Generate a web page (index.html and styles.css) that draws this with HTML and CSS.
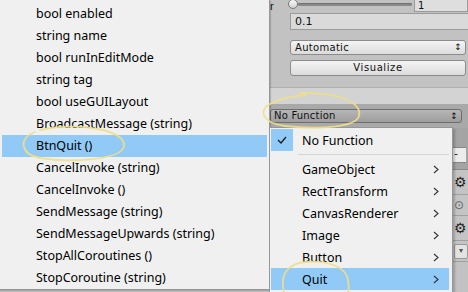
FILE: index.html
```html
<!DOCTYPE html>
<html>
<head>
<meta charset="utf-8">
<link rel="stylesheet" href="styles.css">
</head>
<body>
<div class="inspector">
  <div class="row-slider">
    <span class="lbl">r</span>
    <div class="slider"><span class="thumb"></span><span class="track"></span></div>
    <div class="numfield">1</div>
  </div>
  <div class="field">0.1</div>
  <div class="popup">Automatic<span class="updown">&#x2195;</span></div>
  <div class="button">Visualize</div>
  <div class="section">
    <div class="section-top"></div>
    <div class="event-row">
      <div class="fn-popup">No Function<span class="updown">&#x2195;</span></div>
    </div>
    <div class="event-body">
      <div class="minus-field">-</div>
    </div>
    <div class="comp-row"><span class="gear">&#x2699;</span></div>
    <div class="comp-row small"><span class="target">&#x2299;</span></div>
    <div class="comp-row"><span class="gear">&#x2699;</span></div>
    <div class="comp-row small"><span class="mini-drop">&#x25BE;</span></div>
  </div>
</div>

<div class="menu menu-left">
  <div class="item">bool enabled</div>
  <div class="item">string name</div>
  <div class="item">bool runInEditMode</div>
  <div class="item">string tag</div>
  <div class="item">bool useGUILayout</div>
  <div class="item">BroadcastMessage (string)</div>
  <div class="item hl">BtnQuit ()</div>
  <div class="item">CancelInvoke (string)</div>
  <div class="item">CancelInvoke ()</div>
  <div class="item">SendMessage (string)</div>
  <div class="item">SendMessageUpwards (string)</div>
  <div class="item">StopAllCoroutines ()</div>
  <div class="item">StopCoroutine (string)</div>
</div>

<div class="menu menu-right">
  <div class="item2 checked"><span class="check"><svg width="22" height="22" viewBox="0 0 22 22"><polyline points="7,11 10,14 15,8" fill="none" stroke="#1b1b1b" stroke-width="1.3"/></svg></span><span class="t">No Function</span></div>
  <div class="sep"></div>
  <div class="item2"><span class="check"></span><span class="t">GameObject</span><svg class="chev" width="6" height="9" viewBox="0 0 6 9"><polyline points="1,1 5,4.5 1,8" fill="none" stroke="#333" stroke-width="1.1"/></svg></div>
  <div class="item2"><span class="check"></span><span class="t">RectTransform</span><svg class="chev" width="6" height="9" viewBox="0 0 6 9"><polyline points="1,1 5,4.5 1,8" fill="none" stroke="#333" stroke-width="1.1"/></svg></div>
  <div class="item2"><span class="check"></span><span class="t">CanvasRenderer</span><svg class="chev" width="6" height="9" viewBox="0 0 6 9"><polyline points="1,1 5,4.5 1,8" fill="none" stroke="#333" stroke-width="1.1"/></svg></div>
  <div class="item2"><span class="check"></span><span class="t">Image</span><svg class="chev" width="6" height="9" viewBox="0 0 6 9"><polyline points="1,1 5,4.5 1,8" fill="none" stroke="#333" stroke-width="1.1"/></svg></div>
  <div class="item2"><span class="check"></span><span class="t">Button</span><svg class="chev" width="6" height="9" viewBox="0 0 6 9"><polyline points="1,1 5,4.5 1,8" fill="none" stroke="#333" stroke-width="1.1"/></svg></div>
  <div class="item2 hl"><span class="check"></span><span class="t">Quit</span><svg class="chev" width="6" height="9" viewBox="0 0 6 9"><polyline points="1,1 5,4.5 1,8" fill="none" stroke="#333" stroke-width="1.1"/></svg></div>
</div>

<svg class="marks" width="468" height="292" viewBox="0 0 468 292">
  <g fill="none" stroke="#efe08a" stroke-width="1.8" stroke-linecap="round" opacity="0.9">
    <path d="M40,130 C80,122 126,130 124,146 C122,160 70,163 40,158 C20,154 18,138 35,132"/>
    <path d="M300,93 C340,92 362,103 359,116 C356,127 320,130 285,126 C262,123 258,110 270,104 C280,99 292,96 305,95"/>
    <path d="M284,292 C280,276 286,264 305,262 C326,260 346,266 348,280 C349,286 349,290 348,292"/>
  </g>
</svg>
</body>
</html>
```
FILE: styles.css
```css
html, body {
  margin: 0;
  padding: 0;
}
body {
  width: 468px;
  height: 292px;
  overflow: hidden;
  position: relative;
  background: #c2c2c2;
  font-family: "DejaVu Sans", sans-serif;
  font-size: 10px;
  color: #111;
}
.inspector {
  margin-left: 268px;
  display: flex;
  flex-direction: column;
}
.row-slider {
  height: 12px;
  display: flex;
  align-items: flex-start;
}
.lbl {
  font-family: "Liberation Sans", sans-serif;
  font-size: 11px;
  line-height: 12px;
  width: 20px;
  padding-left: 2px;
  box-sizing: border-box;
}
.slider {
  position: relative;
  width: 126px;
  height: 12px;
  margin-left: 0;
}
.track {
  position: absolute;
  left: 10px;
  right: 2px;
  top: 3px;
  height: 3px;
  background: #8a8a8a;
  border-radius: 2px;
  box-shadow: inset 0 1px 0 #707070;
}
.thumb {
  position: absolute;
  left: 0;
  top: -1px;
  width: 10px;
  height: 10px;
  border-radius: 50%;
  background: linear-gradient(#fafafa, #d0d0d0);
  border: 1px solid #7a7a7a;
  box-sizing: border-box;
  z-index: 1;
}
.numfield {
  flex: 1;
  height: 12px;
  background: #dedede;
  border: 1px solid #9a9a9a;
  border-top: none;
  box-sizing: border-box;
  font-size: 10px;
  line-height: 11px;
  padding-left: 3px;
}
.field {
  margin: 1px 0 0 22px;
  height: 17px;
  background: #dadada;
  border: 1px solid #9a9a9a;
  border-right: none;
  box-sizing: border-box;
  font-size: 11px;
  line-height: 15px;
  padding-left: 4px;
}
.popup, .button {
  margin: 10px 2px 0 22px;
  height: 15px;
  border: 1px solid #8c8c8c;
  border-radius: 3px;
  background: linear-gradient(#f4f4f4, #dcdcdc);
  box-sizing: border-box;
  line-height: 13px;
  padding-left: 4px;
  display: flex;
  letter-spacing: 0.3px;
}
.button {
  margin-top: 5px;
  height: 16px;
  justify-content: center;
  padding-left: 0;
  line-height: 14px;
  letter-spacing: 0.6px;
}
.updown {
  margin-left: auto;
  margin-right: 3px;
  font-size: 9px;
}
.section {
  margin-top: 11px;
  display: flex;
  flex-direction: column;
}
.section-top {
  height: 16px;
  background: #d3d3d3;
  border-top: 1px solid #b0b0b0;
}
.event-row {
  height: 24px;
  background: #a9a9a9;
  padding: 5px 6px 0 2px;
  box-sizing: border-box;
}
.fn-popup {
  height: 14px;
  background: linear-gradient(#b6b6b6, #9e9e9e);
  border: 1px solid #6e6e6e;
  border-radius: 3px;
  box-sizing: border-box;
  line-height: 12px;
  padding-left: 3px;
  display: flex;
  letter-spacing: 0.2px;
}
.event-body {
  height: 42px;
  background: #a4a4a4;
  padding: 19px 2px 0 184px;
  box-sizing: border-box;
  border-bottom: 1px solid #8a8a8a;
}
.minus-field {
  height: 16px;
  background: #ececec;
  border: 1px solid #888;
  border-right: none;
  font-size: 11px;
  line-height: 12px;
  padding-left: 1px;
  box-sizing: border-box;
}
.comp-row {
  height: 24px;
  border-bottom: 1px solid #a0a0a0;
  padding-left: 186px;
  display: flex;
  align-items: center;
  background: #c4c4c4;
}
.comp-row.small {
  height: 20px;
}
.gear {
  font-size: 14px;
  color: #222;
}
.target {
  font-size: 12px;
  color: #666;
}
.mini-drop {
  display: inline-block;
  width: 12px;
  height: 13px;
  background: #e2e2e2;
  border: 1px solid #999;
  border-radius: 2px;
  font-size: 8px;
  text-align: center;
  line-height: 12px;
  color: #555;
}

.menu {
  position: absolute;
  background: #f0f0f0;
  font-family: "Noto Sans", "Open Sans", sans-serif;
  font-size: 12.5px;
  color: #000;
  box-sizing: border-box;
}
.menu-left {
  left: -1px;
  top: 0;
  width: 271px;
  padding: 3px 2px 0;
  height: 290px;
  border: 1px solid #979797;
  border-top: none;
  box-shadow: 1px 1px 1px rgba(0,0,0,0.15);
}
.item {
  height: 22px;
  line-height: 22px;
  padding-left: 34px;
  white-space: nowrap;
}
.hl {
  background: #91c9f7;
}
.menu-right {
  left: 269px;
  top: 127px;
  width: 184px;
  height: 170px;
  padding: 1px 3px 0 1px;
  border: 1px solid #979797;
  box-shadow: 2px 2px 2px rgba(0,0,0,0.2);
}
.item2 {
  height: 22px;
  display: flex;
  align-items: center;
  white-space: nowrap;
}
.check {
  width: 22px;
  height: 22px;
  flex: none;
}
.checked .check {
  background: #91c9f7;
}
.t {
  margin-left: 9px;
}
.chev {
  margin-left: auto;
  margin-right: 10px;
}
.sep {
  height: 1px;
  background: #d5d5d5;
  margin: 3px 0 3px 27px;
}
.marks {
  position: absolute;
  left: 0;
  top: 0;
  pointer-events: none;
}
```
